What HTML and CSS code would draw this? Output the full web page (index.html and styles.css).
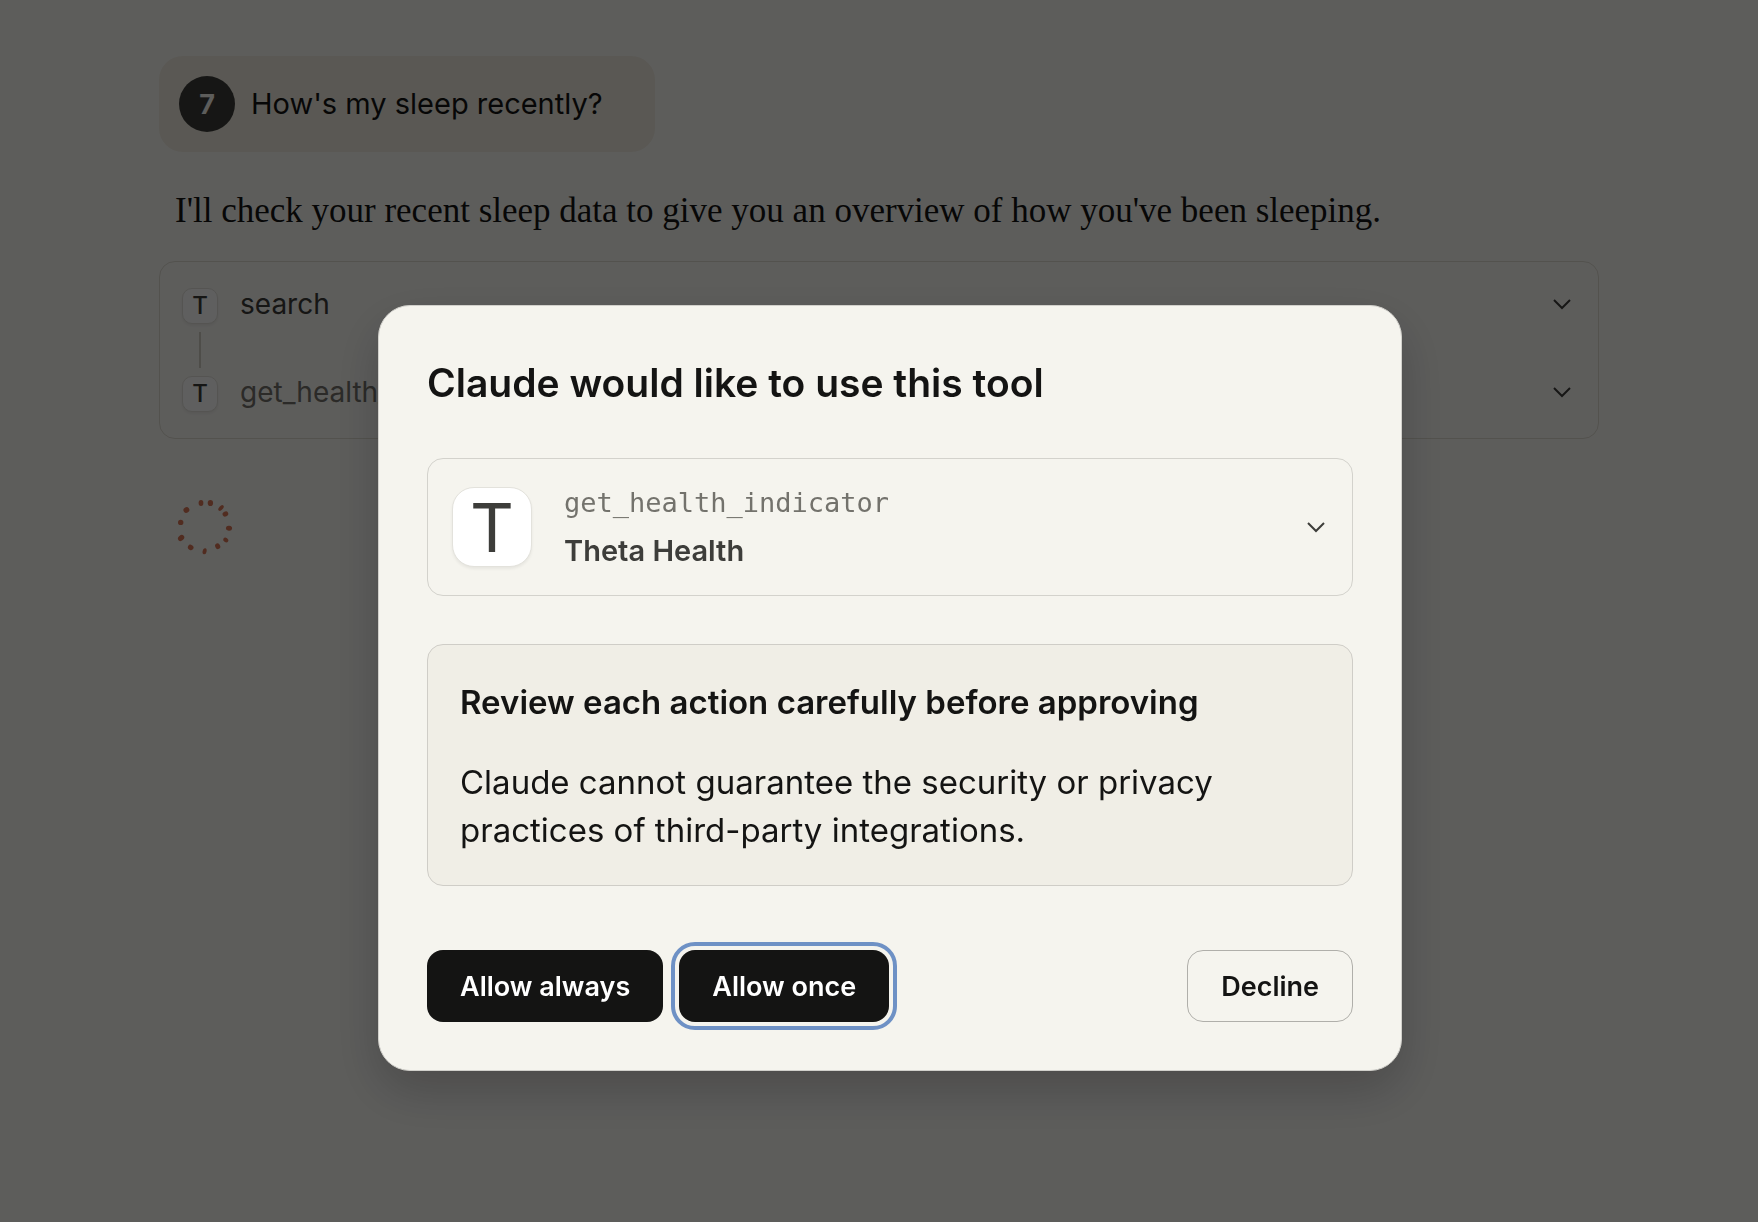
FILE: index.html
```html
<!DOCTYPE html>
<html lang="en">
<head>
    <meta charset="UTF-8">
    <meta name="viewport" content="width=device-width, initial-scale=1">
    <title>Claude</title>
    <link rel="stylesheet" href="styles.css">
</head>
<body>
    <main class="chat">
        <div class="message">
            <span class="avatar">7</span>
            <p class="message-text">How's my sleep recently?</p>
        </div>

        <p class="reply">I'll check your recent sleep data to give you an overview of how you've been sleeping.</p>

        <div class="calls">
            <button type="button" class="call">
                <span class="call-side">
                    <span class="tile">T</span>
                    <span class="call-line"></span>
                </span>
                <span class="call-name">search</span>
                <svg class="chevron" viewBox="0 0 32 32"><path d="M8 12l8 8 8-8"/></svg>
            </button>
            <button type="button" class="call pending">
                <span class="call-side">
                    <span class="tile">T</span>
                </span>
                <span class="call-name">get_health_indicator</span>
                <svg class="chevron" viewBox="0 0 32 32"><path d="M8 12l8 8 8-8"/></svg>
            </button>
        </div>

        <svg class="spinner" viewBox="0 0 56 56">
            <ellipse cx="24" cy="4" rx="2.4" ry="3"/>
            <ellipse cx="33.4" cy="4" rx="2.7" ry="3.1"/>
            <ellipse cx="44" cy="9" rx="1.9" ry="3.4" transform="rotate(42 44 9)"/>
            <ellipse cx="48.4" cy="15" rx="2.9" ry="2.5" transform="rotate(-25 48.4 15)"/>
            <ellipse cx="52" cy="29.3" rx="3.1" ry="2.5" transform="rotate(8 52 29.3)"/>
            <ellipse cx="48.8" cy="41" rx="2.8" ry="2.2" transform="rotate(35 48.8 41)"/>
            <ellipse cx="40.7" cy="47.2" rx="2.5" ry="2.9" transform="rotate(-25 40.7 47.2)"/>
            <ellipse cx="27.6" cy="52.3" rx="2" ry="3" transform="rotate(12 27.6 52.3)"/>
            <ellipse cx="13.7" cy="48.4" rx="2.9" ry="2.6" transform="rotate(30 13.7 48.4)"/>
            <ellipse cx="4.1" cy="39" rx="3.4" ry="2.7" transform="rotate(-40 4.1 39)"/>
            <ellipse cx="3.7" cy="23.4" rx="2.7" ry="2.6"/>
            <ellipse cx="9.4" cy="11" rx="3" ry="2.8" transform="rotate(-35 9.4 11)"/>
        </svg>
    </main>

    <div class="overlay">
        <div class="modal" role="dialog" aria-modal="true" aria-labelledby="modal-title">
            <h1 class="modal-title" id="modal-title">Claude would like to use this tool</h1>

            <button type="button" class="tool">
                <span class="tile tile-large">T</span>
                <span class="tool-text">
                    <span class="tool-id">get_health_indicator</span>
                    <span class="tool-owner">Theta Health</span>
                </span>
                <svg class="chevron" viewBox="0 0 32 32"><path d="M8 12l8 8 8-8"/></svg>
            </button>

            <section class="warning">
                <h2 class="warning-title">Review each action carefully before approving</h2>
                <p class="warning-text">Claude cannot guarantee the security or privacy practices of third-party integrations.</p>
            </section>

            <div class="actions">
                <button type="button" class="btn">Allow always</button>
                <button type="button" class="btn focused">Allow once</button>
                <button type="button" class="btn btn-outline">Decline</button>
            </div>
        </div>
    </div>
</body>
</html>
```
FILE: styles.css
```css
* {
    box-sizing: border-box;
}
body {
    margin: 0;
    background-color: #faf9f5;
    color: #141413;
    font-family: Inter, "Liberation Sans", sans-serif;
}
h1, h2, p {
    margin: 0;
}
button {
    font-family: inherit;
    color: inherit;
    cursor: pointer;
}

/* conversation */
.chat {
    max-width: 1440px;
    margin: 0 auto;
    padding-top: 56px;
}
.message {
    display: flex;
    align-items: center;
    gap: 16px;
    width: fit-content;
    padding: 20px 52px 20px 20px;
    border-radius: 24px;
    background-color: #f0ece0;
}
.avatar {
    display: flex;
    align-items: center;
    justify-content: center;
    width: 56px;
    height: 56px;
    border-radius: 50%;
    background-color: #3d3d3a;
    color: #faf9f5;
    font-size: 27px;
    font-weight: 700;
}
.message-text {
    font-size: 29px;
    line-height: 40px;
}
.reply {
    margin: 35px 16px 26px;
    font-family: "Liberation Serif", serif;
    font-size: 35px;
    line-height: 48px;
}
.calls {
    padding: 26px 20px 26px 22px;
    border: 1px solid #dedcd1;
    border-radius: 16px;
}
.call {
    display: flex;
    align-items: flex-start;
    width: 100%;
    padding: 0;
    border: none;
    background: none;
    color: #3d3d3a;
    font-size: 28px;
    line-height: 32px;
    text-align: left;
}
.call-side {
    display: flex;
    flex-direction: column;
    align-items: center;
    gap: 8px;
    margin-right: 22px;
}
.call-line {
    width: 2px;
    height: 36px;
    margin-bottom: 8px;
    background-color: #d1cfc5;
}
.call-name {
    flex: 1;
}
.pending .call-name {
    color: #73726c;
}
.tile {
    display: flex;
    align-items: center;
    justify-content: center;
    width: 36px;
    height: 36px;
    border: 1px solid #e3e2dc;
    border-radius: 10px;
    background-color: #fff;
    box-shadow: 0 2px 3px rgba(0, 0, 0, 0.06);
    color: #3d3d3a;
    font-size: 24px;
    font-weight: 500;
    line-height: 1;
}
.tile-large {
    width: 80px;
    height: 80px;
    border-radius: 22px;
    font-size: 68px;
    font-weight: 400;
}
.chevron {
    width: 32px;
    height: 32px;
    fill: none;
    stroke: #3d3d3a;
    stroke-width: 2;
}
.spinner {
    display: block;
    width: 56px;
    height: 56px;
    margin: 60px 18px;
    fill: #d97757;
}

/* permission dialog */
.overlay {
    position: fixed;
    inset: 0;
    display: flex;
    justify-content: center;
    align-items: flex-start;
    padding: 305px 0 0 22px;
    background-color: rgba(0, 0, 0, 0.627);
}
.modal {
    width: 100%;
    max-width: 1024px;
    padding: 48px;
    border: 1px solid #d1d0cb;
    border-radius: 32px;
    background-color: #f5f4ee;
    box-shadow: 0 20px 50px rgba(0, 0, 0, 0.2);
}
.modal-title {
    margin-bottom: 46px;
    font-size: 39px;
    font-weight: 600;
    line-height: 58px;
}
.tool {
    display: flex;
    align-items: center;
    width: 100%;
    padding: 20px 20px 20px 24px;
    border: 1px solid #d3d2cc;
    border-radius: 16px;
    background: none;
    text-align: left;
}
.tool-text {
    display: flex;
    flex-direction: column;
    flex: 1;
    margin-left: 32px;
    line-height: 48px;
}
.tool-id {
    color: #73726c;
    font-family: "DejaVu Sans Mono", monospace;
    font-size: 27px;
}
.tool-owner {
    color: #3d3d3a;
    font-size: 29px;
    font-weight: 600;
}
.warning {
    margin: 48px 0 64px;
    padding: 33px 32px 31px;
    border: 1px solid #cfcdc7;
    border-radius: 16px;
    background-color: #f0eee6;
    font-size: 33px;
    line-height: 48px;
}
.warning-title {
    margin-bottom: 32px;
    font-size: 33px;
    font-weight: 600;
}
.actions {
    display: flex;
    gap: 16px;
}
.btn {
    height: 72px;
    padding: 0 33px;
    border: none;
    border-radius: 16px;
    background-color: #141413;
    color: #fff;
    font-size: 27px;
    font-weight: 600;
}
.focused {
    outline: 4px solid #6e91c5;
    outline-offset: 4px;
}
.btn-outline {
    margin-left: auto;
    border: 1px solid #b0afaa;
    background: none;
    color: #141413;
}
```
